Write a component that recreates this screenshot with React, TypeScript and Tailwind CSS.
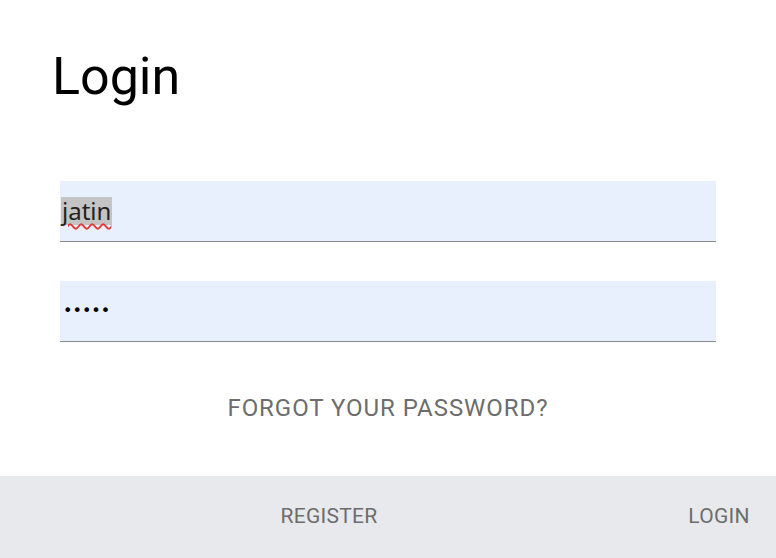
import React from 'react';

export default function App() {
  return (
    <div className="w-[776px] h-[558px] bg-white flex flex-col font-['Roboto',sans-serif]">
      {/* Title */}
      <h1 className="pl-[52px] pt-[51px] text-[52px] leading-none font-normal text-black">
        Login
      </h1>

      {/* Fields */}
      <div className="mt-[78px] mx-[60px] flex flex-col gap-[39px]">
        <div className="h-[61px] bg-[#e8f0fe] border-b border-[#8a8a8a] flex items-center">
          <span className="ml-px px-px bg-[#c4c4c4] text-[24px] leading-[28px] text-[#222] font-['Noto_Sans',sans-serif] underline decoration-wavy decoration-[#e53935] decoration-[1.5px] underline-offset-[3px]">
            jatin
          </span>
        </div>
        <div className="h-[61px] bg-[#e8f0fe] border-b border-[#8a8a8a] flex items-center">
          <span className="ml-[3px] text-[16px] text-black font-['DejaVu_Sans',sans-serif]">
            •••••
          </span>
        </div>
      </div>

      {/* Forgot */}
      <div className="mt-[48px] flex justify-center">
        <button className="text-[24px] tracking-[0.95px] text-[#6d6d6d] uppercase">
          Forgot your password?
        </button>
      </div>

      {/* Footer */}
      <div className="mt-auto h-[82px] bg-[#e8e9ec] flex items-center">
        <button className="w-[658px] text-[21px] tracking-[0.3px] text-[#6d6d6d] uppercase">
          Register
        </button>
        <button className="flex-1 pl-[4px] text-[21px] tracking-[0.3px] text-[#6d6d6d] uppercase">
          Login
        </button>
      </div>
    </div>
  );
}
